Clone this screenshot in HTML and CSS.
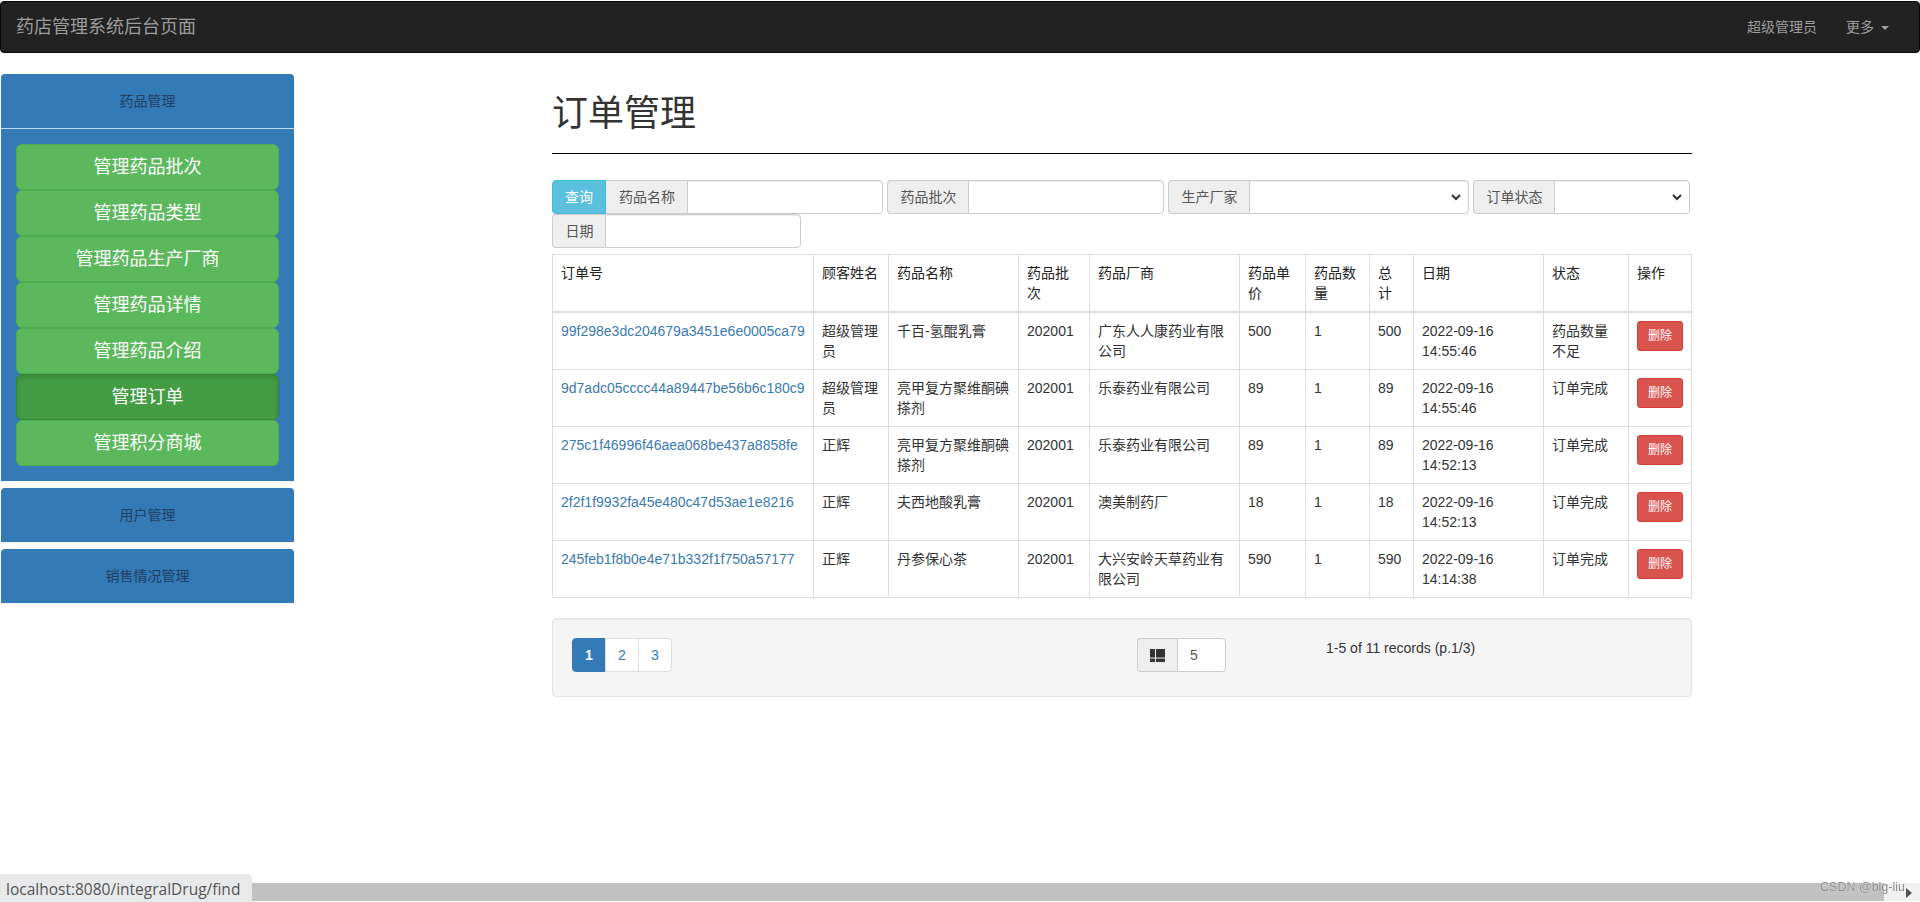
FILE: index.html
```html
<!DOCTYPE html>
<html lang="zh-CN">
<head>
<meta charset="utf-8">
<title>药店管理系统后台页面</title>
<link rel="stylesheet" href="styles.css">
</head>
<body>
<nav class="navbar">
  <a class="brand">药店管理系统后台页面</a>
  <div class="nav-right">
    <a class="nav-link">超级管理员</a>
    <a class="nav-link more">更多<span class="caret"></span></a>
  </div>
</nav>
<div class="page">
  <aside class="sidebar">
    <section class="panel">
      <div class="panel-head">药品管理</div>
      <div class="panel-body">
        <a class="menu-btn">管理药品批次</a>
        <a class="menu-btn">管理药品类型</a>
        <a class="menu-btn">管理药品生产厂商</a>
        <a class="menu-btn">管理药品详情</a>
        <a class="menu-btn">管理药品介绍</a>
        <a class="menu-btn active">管理订单</a>
        <a class="menu-btn">管理积分商城</a>
      </div>
    </section>
    <section class="panel"><div class="panel-head plain">用户管理</div></section>
    <section class="panel"><div class="panel-head plain">销售情况管理</div></section>
  </aside>
  <main class="main">
    <h1 class="title">订单管理</h1>
    <hr class="rule">
    <form class="search">
      <div class="group g-first">
        <button type="button" class="query">查询</button>
        <span class="addon a-name">药品名称</span>
        <input class="field f-name" type="text">
      </div>
      <div class="group g-batch">
        <span class="addon a-batch">药品批次</span>
        <input class="field f-batch" type="text">
      </div>
      <div class="group g-maker">
        <span class="addon a-maker">生产厂家</span>
        <select class="field pick f-maker"><option></option></select>
      </div>
      <div class="group g-state">
        <span class="addon a-state">订单状态</span>
        <select class="field pick f-state"><option></option></select>
      </div>
      <div class="group g-date">
        <span class="addon a-date">日期</span>
        <input class="field f-date" type="text">
      </div>
    </form>
    <table class="orders">
      <colgroup>
        <col class="c1"><col class="c2"><col class="c3"><col class="c4"><col class="c5"><col class="c6"><col class="c7"><col class="c8"><col class="c9"><col class="c10"><col class="c11">
      </colgroup>
      <thead>
        <tr><th>订单号</th><th>顾客姓名</th><th>药品名称</th><th>药品批次</th><th>药品厂商</th><th>药品单价</th><th>药品数量</th><th>总计</th><th>日期</th><th>状态</th><th>操作</th></tr>
      </thead>
      <tbody>
        <tr><td><a class="link">99f298e3dc204679a3451e6e0005ca79</a></td><td>超级管理员</td><td>千百-氢醌乳膏</td><td>202001</td><td>广东人人康药业有限公司</td><td>500</td><td>1</td><td>500</td><td>2022-09-16 14:55:46</td><td>药品数量不足</td><td><button type="button" class="del">删除</button></td></tr>
        <tr><td><a class="link">9d7adc05cccc44a89447be56b6c180c9</a></td><td>超级管理员</td><td>亮甲复方聚维酮碘搽剂</td><td>202001</td><td>乐泰药业有限公司</td><td>89</td><td>1</td><td>89</td><td>2022-09-16 14:55:46</td><td>订单完成</td><td><button type="button" class="del">删除</button></td></tr>
        <tr><td><a class="link">275c1f46996f46aea068be437a8858fe</a></td><td>正辉</td><td>亮甲复方聚维酮碘搽剂</td><td>202001</td><td>乐泰药业有限公司</td><td>89</td><td>1</td><td>89</td><td>2022-09-16 14:52:13</td><td>订单完成</td><td><button type="button" class="del">删除</button></td></tr>
        <tr><td><a class="link">2f2f1f9932fa45e480c47d53ae1e8216</a></td><td>正辉</td><td>夫西地酸乳膏</td><td>202001</td><td>澳美制药厂</td><td>18</td><td>1</td><td>18</td><td>2022-09-16 14:52:13</td><td>订单完成</td><td><button type="button" class="del">删除</button></td></tr>
        <tr><td><a class="link">245feb1f8b0e4e71b332f1f750a57177</a></td><td>正辉</td><td>丹参保心茶</td><td>202001</td><td>大兴安岭天草药业有限公司</td><td>590</td><td>1</td><td>590</td><td>2022-09-16 14:14:38</td><td>订单完成</td><td><button type="button" class="del">删除</button></td></tr>
      </tbody>
    </table>
    <div class="pager-well">
      <div class="pages">
        <a class="page-item current">1</a>
        <a class="page-item">2</a>
        <a class="page-item">3</a>
      </div>
      <div class="size-group">
        <span class="size-icon">
          <svg width="15" height="13" viewBox="0 0 15 13" aria-hidden="true"><path fill="#333" d="M0 0h5v8.500H0zM6 0h9v8.500H6zM0 9.500h5V13H0zM6 9.500h9V13H6z"/></svg>
        </span>
        <span class="size-value">5</span>
      </div>
      <div class="records">1-5 of 11 records (p.1/3)</div>
    </div>
  </main>
</div>
<div class="scrollbar">
  <div class="thumb"></div>
  <svg class="arrow" width="8" height="10" viewBox="0 0 8 10" aria-hidden="true"><path fill="#505050" d="M1 0l6 5-6 5z"/></svg>
</div>
<div class="status">localhost:8080/integralDrug/find</div>
<div class="watermark">CSDN @big-liu</div>
</body>
</html>
```
FILE: styles.css
```css
* { box-sizing: border-box; }
html, body { height: 100%; }
body {
  margin: 0;
  overflow: hidden;
  background: #fff;
  color: #333;
  font: 14px/20px "Liberation Sans", "Noto Sans CJK SC", sans-serif;
}
a { text-decoration: none; }

/* navbar */
.navbar {
  height: 52px;
  margin-top: 1px;
  padding: 0 15px;
  display: flex;
  align-items: center;
  justify-content: space-between;
  background: #222;
  border: 1px solid #080808;
  border-radius: 4px;
}
.brand { font-size: 18px; color: #9d9d9d; }
.nav-right { display: flex; align-items: center; }
.nav-link { color: #9d9d9d; }
.more { margin-left: 29px; margin-right: 15px; }
.caret {
  display: inline-block;
  margin-left: 7px;
  vertical-align: middle;
  border-top: 4px solid #9d9d9d;
  border-left: 4px solid transparent;
  border-right: 4px solid transparent;
}

/* layout */
.page { display: flex; padding-top: 21px; }
.sidebar { width: 293px; margin-left: 1px; flex: none; }
.main { width: 1140px; margin-left: 258px; flex: none; }

/* sidebar */
.panel { background: #337ab7; border-radius: 4px 4px 0 0; margin-bottom: 7px; box-shadow: 0 1px 1px rgba(0,0,0,.05); }
.panel-head {
  height: 55px;
  display: flex;
  align-items: center;
  justify-content: center;
  color: #23405f;
  border-bottom: 1px solid #bcdcf0;
}
.panel-head.plain { height: 54px; border-bottom: 0; }
.panel-body { padding: 15px; display: flex; flex-direction: column; }
.menu-btn {
  height: 46px;
  display: flex;
  align-items: center;
  justify-content: center;
  font-size: 18px;
  color: #fff;
  background: #5cb85c;
  border: 1px solid #4cae4c;
  border-radius: 6px;
}
.menu-btn.active {
  background: #449d44;
  border-color: #398439;
  box-shadow: inset 0 3px 5px rgba(0,0,0,.125);
}

/* main */
.title { margin: 0; padding-top: 20px; height: 79px; font-size: 36px; line-height: 40px; font-weight: 400; color: #333; }
.rule { margin: 0; height: 1px; border: 0; background: #000; }
.search { display: flex; flex-wrap: wrap; padding-top: 26px; width: 1140px; }
.group { display: flex; height: 34px; margin-right: 4px; }
.g-state { margin-right: 0; }
.query {
  width: 54px;
  padding: 0;
  font: inherit;
  color: #fff;
  background: #5bc0de;
  border: 1px solid #46b8da;
  border-radius: 4px 0 0 4px;
}
.addon {
  display: flex;
  align-items: center;
  justify-content: center;
  padding-left: 1px;
  color: #555;
  background: #eee;
  border: 1px solid #ccc;
  border-right: 0;
}
.g-batch .addon, .g-maker .addon, .g-state .addon, .g-date .addon { border-radius: 4px 0 0 4px; }
.field {
  height: 100%;
  padding: 6px 12px;
  font: inherit;
  color: #555;
  background: #fff;
  border: 1px solid #ccc;
  border-radius: 0 4px 4px 0;
  box-shadow: inset 0 1px 1px rgba(0,0,0,.075);
}
.pick {
  appearance: none;
  background: #fff url("data:image/svg+xml,%3Csvg xmlns='http://www.w3.org/2000/svg' width='10' height='7'%3E%3Cpath d='M1 1l4 4 4-4' fill='none' stroke='%23333' stroke-width='2'/%3E%3C/svg%3E") no-repeat right 7px center;
}
.a-name { width: 81px; border-left: 0; }
.f-name { width: 196px; }
.a-batch { width: 81px; }
.f-batch { width: 196px; }
.a-maker { width: 81px; }
.f-maker { width: 220px; }
.a-state { width: 81px; }
.f-state { width: 136px; }
.a-date { width: 53px; }
.f-date { width: 196px; }

/* table */
.orders {
  width: 1139px;
  margin-top: 6px;
  table-layout: fixed;
  border-collapse: collapse;
  border: 1px solid #ddd;
}
.orders th, .orders td {
  padding: 8px;
  border: 1px solid #ddd;
  text-align: left;
  vertical-align: top;
  font-weight: 400;
  word-break: normal;
}
.orders th { color: #222; border-bottom-width: 2px; }
.c1 { width: 261px; }
.c2 { width: 75px; }
.c3 { width: 130px; }
.c4 { width: 71px; }
.c5 { width: 150px; }
.c6 { width: 66px; }
.c7 { width: 64px; }
.c8 { width: 44px; }
.c9 { width: 130px; }
.c10 { width: 85px; }
.c11 { width: 63px; }
.link { color: #3a7ab2; }
.del {
  display: block;
  width: 46px;
  height: 30px;
  padding: 0;
  font: inherit;
  font-size: 12px;
  color: #fff;
  background: #d9534f;
  border: 1px solid #d43f3a;
  border-radius: 3px;
}

/* pager */
.pager-well {
  display: flex;
  align-items: flex-start;
  height: 79px;
  margin-top: 20px;
  padding: 19px;
  background: #f5f5f5;
  border: 1px solid #e3e3e3;
  border-radius: 4px;
  box-shadow: inset 0 1px 1px rgba(0,0,0,.05);
}
.pages { display: flex; }
.page-item {
  width: 34px;
  height: 34px;
  line-height: 32px;
  text-align: center;
  color: #337ab7;
  background: #fff;
  border: 1px solid #ddd;
  margin-left: -1px;
}
.page-item:first-child { margin-left: 0; border-radius: 4px 0 0 4px; }
.page-item:last-child { border-radius: 0 4px 4px 0; }
.page-item.current { color: #fff; background: #337ab7; border-color: #337ab7; font-weight: 700; }
.size-group { display: flex; height: 34px; margin-left: 465px; }
.size-icon {
  width: 40px;
  display: flex;
  align-items: center;
  justify-content: center;
  background: #eee;
  border: 1px solid #ccc;
  border-right: 0;
  border-radius: 4px 0 0 4px;
}
.size-value {
  width: 49px;
  padding: 6px 12px;
  color: #555;
  background: #fff;
  border: 1px solid #ccc;
  border-radius: 0 4px 4px 0;
}
.records { margin-left: 100px; color: #333; }

/* browser chrome overlays */
.scrollbar {
  position: fixed;
  left: 0;
  right: 0;
  bottom: 1px;
  height: 18px;
  background: #f1f1f1;
}
.thumb { width: 1884px; height: 100%; background: #c1c1c1; }
.arrow { position: absolute; right: 7px; top: 5px; }
.status {
  position: fixed;
  left: 0;
  bottom: 0;
  width: 252px;
  height: 28px;
  padding-left: 6px;
  font: 15.5px/30px "Open Sans", sans-serif;
  color: #555;
  background: #e8e9eb;
  border-radius: 0 4px 0 0;
}
.watermark {
  position: fixed;
  right: 15px;
  bottom: 8px;
  font-size: 12.5px;
  line-height: 14px;
  color: #8a8a8a;
  text-shadow: 0 0 1px #fff;
}
```
